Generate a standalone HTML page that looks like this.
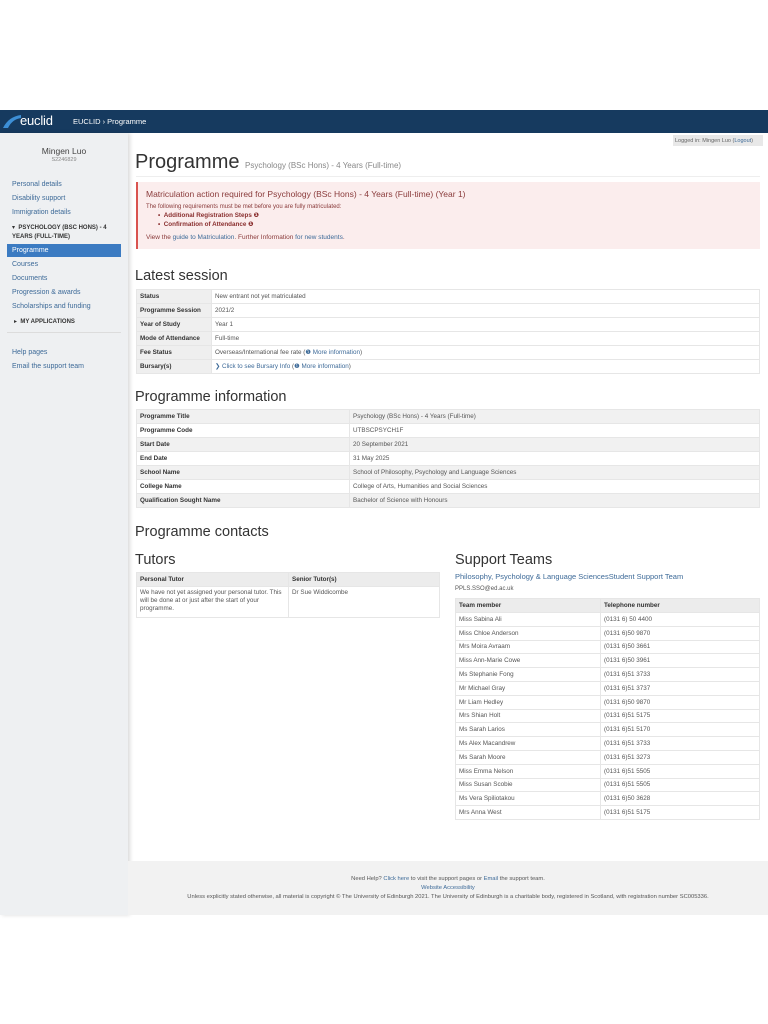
<!DOCTYPE html>
<html><head><meta charset="utf-8"><style>
*{margin:0;padding:0;box-sizing:border-box}
body{width:768px;height:1024px;background:#fff;font-family:"Liberation Sans","DejaVu Sans",sans-serif;position:relative;overflow:hidden;color:#333}
.a{position:absolute}
#nav{left:0;top:110px;width:768px;height:23px;background:#163a5f}
#side{left:0;top:133px;width:128px;height:782px;background:#eef0f2;box-shadow:2px 0 4px rgba(0,0,0,.15)}
.sl{position:absolute;left:12px;font-size:7px;color:#3d6a98}
.sb{position:absolute;font-size:6px;font-weight:bold;color:#333}
h1{position:absolute;font-weight:normal;color:#333}
table{border-collapse:collapse;position:absolute;font-size:6.3px}
td,th{border:1px solid #e6e6e6;text-align:left;padding:0 3px;color:#555}
th{background:#ececec;font-weight:bold;color:#333}
.lab{background:#efefef;font-weight:bold;color:#333}
a{color:#3d6a98;text-decoration:none}
</style></head><body>
<div id="nav" class="a">
<svg class="a" style="left:3px;top:4px" width="18" height="15" viewBox="0 0 18 15"><path d="M0 14 C4 6 10 2 18 1 L18 4 C12 5 8 8 5 14 Z" fill="#3d8fd6"/></svg>
<div class="a" style="left:20px;top:3px;font-size:13px;color:#fff;letter-spacing:-.2px">euclid</div>
<div class="a" style="left:73px;top:7px;font-size:7.5px;color:#fff">EUCLID › Programme</div>
</div>
<div id="side" class="a">
<div class="a" style="left:0;width:128px;top:13px;text-align:center;font-size:8.5px;color:#444">Mingen Luo</div>
<div class="a" style="left:0;width:128px;top:24px;text-align:center;font-size:5.5px;color:#888">S2246829</div>
<div class="sl" style="top:48px">Personal details</div>
<div class="sl" style="top:62px">Disability support</div>
<div class="sl" style="top:76px">Immigration details</div>
<div class="sb" style="left:12px;top:91px;line-height:9px;width:112px">▾&nbsp; PSYCHOLOGY (BSC HONS) - 4 YEARS (FULL-TIME)</div>
<div class="a" style="left:7px;top:111px;width:114px;height:13px;background:#3b7bc2"></div>
<div class="sl" style="top:114px;color:#fff">Programme</div>
<div class="sl" style="top:128px">Courses</div>
<div class="sl" style="top:142px">Documents</div>
<div class="sl" style="top:156px">Progression &amp; awards</div>
<div class="sl" style="top:170px">Scholarships and funding</div>
<div class="sb" style="left:14px;top:185px">▸&nbsp; MY APPLICATIONS</div>
<div class="a" style="left:7px;top:199px;width:114px;height:1px;background:#dcdcdc"></div>
<div class="sl" style="top:216px">Help pages</div>
<div class="sl" style="top:230px">Email the support team</div>
</div>
<div class="a" style="left:673px;top:135px;width:90px;height:11px;background:#e8e8e8;font-size:5.5px;color:#666;padding:3px 2px">Logged in: Mingen Luo (<a>Logout</a>)</div>
<h1 style="left:135px;top:151px;font-size:20px">Programme <span style="font-size:8px;color:#888">Psychology (BSc Hons) - 4 Years (Full-time)</span></h1>
<div class="a" style="left:136px;top:176px;width:624px;height:1px;background:#eee"></div>
<div class="a" style="left:136px;top:182px;width:624px;height:67px;background:#fbeded;border-left:2px solid #d9534f">
<div class="a" style="left:8px;top:7px;font-size:8.5px;color:#8a3b3b">Matriculation action required for Psychology (BSc Hons) - 4 Years (Full-time) (Year 1)</div>
<div class="a" style="left:8px;top:22px;font-size:6px;color:#8a3b3b">The following requirements must be met before you are fully matriculated:</div>
<div class="a" style="left:20px;top:30px;font-size:6.3px;font-weight:bold;color:#8a2f2f">• &nbsp;Additional Registration Steps ❶</div>
<div class="a" style="left:20px;top:39px;font-size:6.3px;font-weight:bold;color:#8a2f2f">• &nbsp;Confirmation of Attendance ❶</div>
<div class="a" style="left:8px;top:52px;font-size:6.5px;color:#8a3b3b">View the <a>guide to Matriculation</a>. Further Information <a>for new students</a>.</div>
</div>
<h1 style="left:135px;top:268px;font-size:14.5px">Latest session</h1>
<table style="left:136px;top:289px;width:624px">
<tr style="height:14px"><td class="lab" style="width:75px">Status</td><td>New entrant not yet matriculated</td></tr>
<tr style="height:14px"><td class="lab">Programme Session</td><td>2021/2</td></tr>
<tr style="height:14px"><td class="lab">Year of Study</td><td>Year 1</td></tr>
<tr style="height:14px"><td class="lab">Mode of Attendance</td><td>Full-time</td></tr>
<tr style="height:14px"><td class="lab">Fee Status</td><td>Overseas/International fee rate (<a>❶ More information</a>)</td></tr>
<tr style="height:14px"><td class="lab">Bursary(s)</td><td><a>❯ Click to see Bursary Info</a> (<a>❶ More information</a>)</td></tr>
</table>
<h1 style="left:135px;top:389px;font-size:14.5px">Programme information</h1>
<table style="left:136px;top:409px;width:624px">
<tr style="height:14px;background:#f1f1f1"><td class="lab" style="width:213px;background:none">Programme Title</td><td>Psychology (BSc Hons) - 4 Years (Full-time)</td></tr>
<tr style="height:14px"><td class="lab" style="background:none">Programme Code</td><td>UTBSCPSYCH1F</td></tr>
<tr style="height:14px;background:#f1f1f1"><td class="lab" style="background:none">Start Date</td><td>20 September 2021</td></tr>
<tr style="height:14px"><td class="lab" style="background:none">End Date</td><td>31 May 2025</td></tr>
<tr style="height:14px;background:#f1f1f1"><td class="lab" style="background:none">School Name</td><td>School of Philosophy, Psychology and Language Sciences</td></tr>
<tr style="height:14px"><td class="lab" style="background:none">College Name</td><td>College of Arts, Humanities and Social Sciences</td></tr>
<tr style="height:14px;background:#f1f1f1"><td class="lab" style="background:none">Qualification Sought Name</td><td>Bachelor of Science with Honours</td></tr>
</table>
<h1 style="left:135px;top:524px;font-size:14.5px">Programme contacts</h1>
<h1 style="left:135px;top:552px;font-size:14.5px">Tutors</h1>
<table style="left:136px;top:572px;width:304px">
<tr style="height:14px"><th style="width:152px">Personal Tutor</th><th>Senior Tutor(s)</th></tr>
<tr style="height:31px;vertical-align:top"><td style="padding-top:2px;line-height:8px">We have not yet assigned your personal tutor. This will be done at or just after the start of your programme.</td><td style="padding-top:2px">Dr Sue Widdicombe</td></tr>
</table>
<h1 style="left:455px;top:552px;font-size:14.5px">Support Teams</h1>
<div class="a" style="left:455px;top:572px;font-size:7.5px;color:#3d6a98">Philosophy, Psychology &amp; Language SciencesStudent Support Team</div>
<div class="a" style="left:455px;top:586px;font-size:6px;color:#555">PPLS.SSO@ed.ac.uk</div>
<table style="left:455px;top:598px;width:305px">
<tr style="height:14px"><th style="width:145px">Team member</th><th>Telephone number</th></tr>
<tr style="height:13.8px"><td>Miss Sabina Ali</td><td>(0131 6) 50 4400</td></tr>
<tr style="height:13.8px"><td>Miss Chloe Anderson</td><td>(0131 6)50 9870</td></tr>
<tr style="height:13.8px"><td>Mrs Moira Avraam</td><td>(0131 6)50 3661</td></tr>
<tr style="height:13.8px"><td>Miss Ann-Marie Cowe</td><td>(0131 6)50 3961</td></tr>
<tr style="height:13.8px"><td>Ms Stephanie Fong</td><td>(0131 6)51 3733</td></tr>
<tr style="height:13.8px"><td>Mr Michael Gray</td><td>(0131 6)51 3737</td></tr>
<tr style="height:13.8px"><td>Mr Liam Hedley</td><td>(0131 6)50 9870</td></tr>
<tr style="height:13.8px"><td>Mrs Shian Holt</td><td>(0131 6)51 5175</td></tr>
<tr style="height:13.8px"><td>Ms Sarah Larios</td><td>(0131 6)51 5170</td></tr>
<tr style="height:13.8px"><td>Ms Alex Macandrew</td><td>(0131 6)51 3733</td></tr>
<tr style="height:13.8px"><td>Ms Sarah Moore</td><td>(0131 6)51 3273</td></tr>
<tr style="height:13.8px"><td>Miss Emma Nelson</td><td>(0131 6)51 5505</td></tr>
<tr style="height:13.8px"><td>Miss Susan Scobie</td><td>(0131 6)51 5505</td></tr>
<tr style="height:13.8px"><td>Ms Vera Spiliotakou</td><td>(0131 6)50 3628</td></tr>
<tr style="height:13.8px"><td>Mrs Anna West</td><td>(0131 6)51 5175</td></tr>
</table>
<div class="a" style="left:128px;top:861px;width:640px;height:54px;background:#f2f2f2;font-size:5.8px;color:#555;text-align:center;line-height:9px;padding-top:14px;white-space:nowrap">
Need Help? <a>Click here</a> to visit the support pages or <a>Email</a> the support team.<br><a>Website Accessibility</a><br>Unless explicitly stated otherwise, all material is copyright © The University of Edinburgh 2021. The University of Edinburgh is a charitable body, registered in Scotland, with registration number SC005336.
</div>
</body></html>
